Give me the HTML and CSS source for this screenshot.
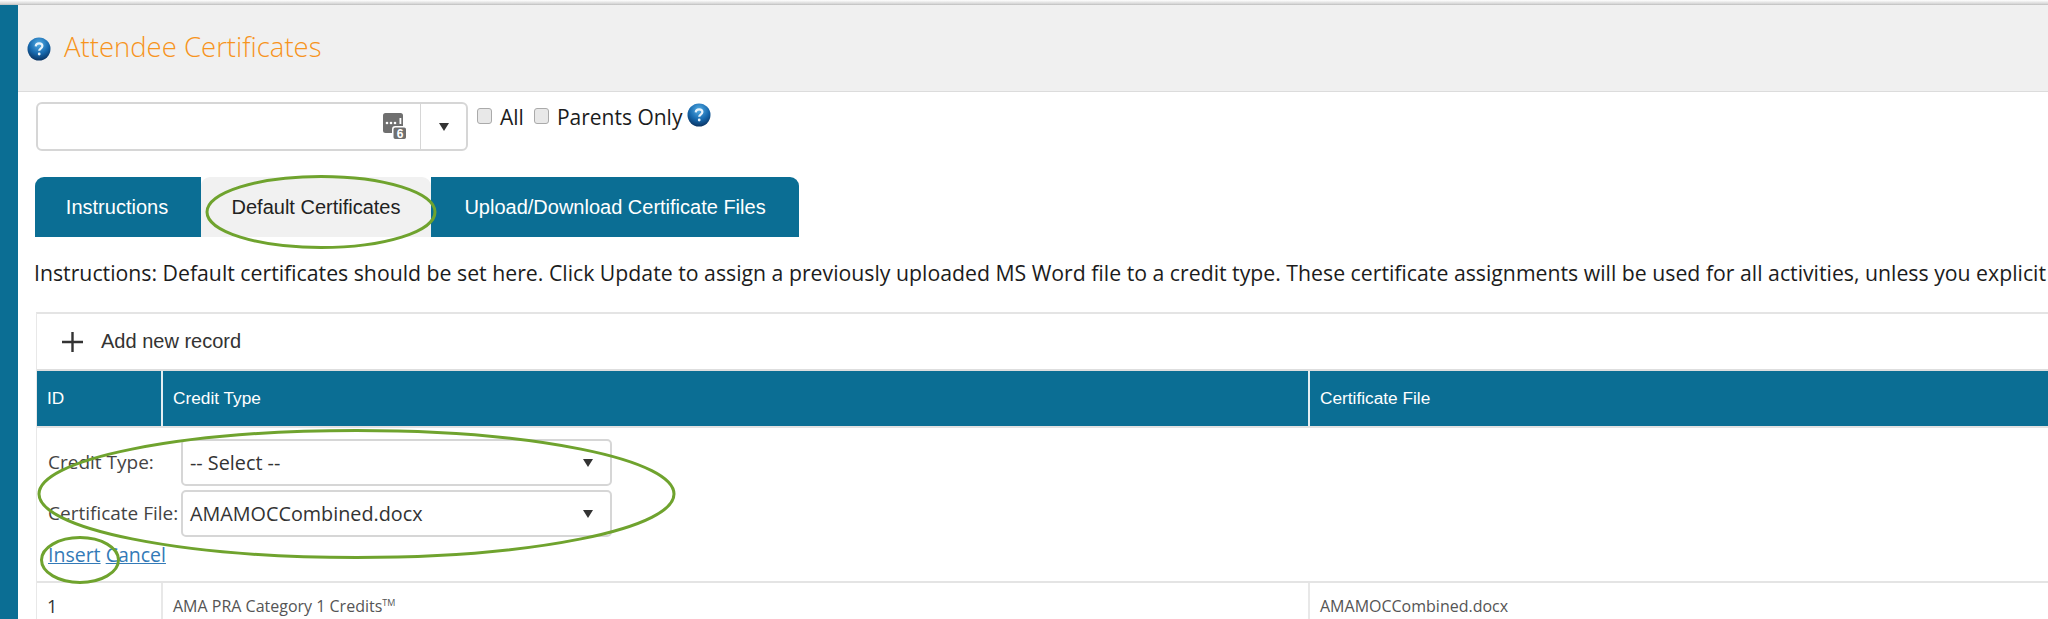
FILE: index.html
```html
<!DOCTYPE html>
<html lang="en">
<head>
<meta charset="utf-8">
<title>Attendee Certificates</title>
<link rel="stylesheet" href="styles.css">
</head>
<body>
<div class="topline"></div>
<div class="shell">
  <aside class="sidebar"></aside>
  <main class="main">
    <header class="pagehead">
      <svg class="help help-lg" viewBox="0 0 24 24"><defs><radialGradient id="hg" cx="50%" cy="28%" r="78%"><stop offset="0" stop-color="#55aee6"/><stop offset=".55" stop-color="#1668ad"/><stop offset="1" stop-color="#082a55"/></radialGradient></defs><circle cx="12" cy="12" r="11.500" fill="url(#hg)"/><path d="M8.700 9.300c.2-2 1.600-3 3.400-3 1.900 0 3.300 1.100 3.300 2.800 0 2.500-3.200 2.500-3.200 4.600" fill="none" stroke="#e8f3fb" stroke-width="2.200"/><circle cx="12.200" cy="17" r="1.400" fill="#e8f3fb"/></svg>
      <h1 class="title">Attendee Certificates</h1>
    </header>
    <div class="filter">
      <div class="combo">
        <div class="combo-input">
          <svg class="combo-icon" viewBox="0 0 24 27"><rect width="20" height="20" rx="2.500" fill="#6f6f6f"/><g fill="#fff"><circle cx="4" cy="10" r="1.300"/><circle cx="8" cy="10" r="1.300"/><circle cx="12" cy="10" r="1.300"/><rect x="16.500" y="5" width="1.800" height="6"/></g><rect x="9.750" y="13.750" width="14" height="13" rx="2.500" fill="#6f6f6f" stroke="#fff" stroke-width="1.500"/><text x="17" y="25" class="combo-num">6</text></svg>
        </div>
        <div class="combo-btn"><span class="tri"></span></div>
      </div>
      <label class="check check-all"><span class="box"></span>All</label>
      <label class="check"><span class="box"></span>Parents Only</label>
      <svg class="help help-sm" viewBox="0 0 24 24"><circle cx="12" cy="12" r="11.500" fill="url(#hg)"/><path d="M8.700 9.300c.2-2 1.600-3 3.400-3 1.900 0 3.300 1.100 3.300 2.800 0 2.500-3.200 2.500-3.200 4.600" fill="none" stroke="#e8f3fb" stroke-width="2.200"/><circle cx="12.200" cy="17" r="1.400" fill="#e8f3fb"/></svg>
    </div>
    <nav class="tabs">
      <a class="tab tab-first">Instructions</a>
      <a class="tab tab-active">Default Certificates</a>
      <a class="tab tab-last">Upload/Download Certificate Files</a>
    </nav>
    <p class="instructions">Instructions: Default certificates should be set here. Click Update to assign a previously uploaded MS Word file to a credit type. These certificate assignments will be used for all activities, unless you explicit</p>
    <section class="grid">
      <div class="toolbar">
        <svg class="plus" viewBox="0 0 21 20"><path d="M10.500 0v20M0 10h21" stroke="#333" stroke-width="2.400" fill="none"/></svg>
        <span>Add new record</span>
      </div>
      <div class="row row-head">
        <div class="cell">ID</div>
        <div class="cell">Credit Type</div>
        <div class="cell">Certificate File</div>
      </div>
      <form class="editor">
        <div class="field">
          <span class="field-label">Credit Type:</span>
          <div class="select"><span>-- Select --</span><span class="tri"></span></div>
        </div>
        <div class="field">
          <span class="field-label">Certificate File:</span>
          <div class="select"><span>AMAMOCCombined.docx</span><span class="tri"></span></div>
        </div>
        <div class="actions"><a class="link">Insert</a> <a class="link">Cancel</a></div>
      </form>
      <div class="row row-data">
        <div class="cell cell-id">1</div>
        <div class="cell">AMA PRA Category 1 Credits<sup class="tm">TM</sup></div>
        <div class="cell">AMAMOCCombined.docx</div>
      </div>
    </section>
  </main>
</div>
<svg class="marks" viewBox="0 0 2048 619" width="2048" height="619">
  <ellipse cx="321" cy="212" rx="114" ry="35.500"/>
  <ellipse cx="356.500" cy="494" rx="317.500" ry="63.500"/>
  <ellipse cx="80" cy="560" rx="38.500" ry="22.500"/>
</svg>
</body>
</html>
```
FILE: styles.css
```css
* { box-sizing: border-box; }
html, body { margin: 0; height: 619px; overflow: hidden; background: #fff; }
body { font-family: "Open Sans", sans-serif; color: #1c1c1c; position: relative; }
.topline { height: 5px; background: linear-gradient(#fff, #d9d9d9 70%, #bdbdbd); }
.shell { display: flex; height: 614px; }
.sidebar { width: 18px; flex: none; background: #0b6e94; }
.main { flex: 1; min-width: 0; overflow: hidden; }
.pagehead { height: 87px; display: flex; align-items: center; padding-left: 9px; gap: 13px; background: #f0f0f0; border-bottom: 1px solid #dcdcdc; }
.help { display: block; flex: none; }
.help-lg { width: 24px; height: 24px; margin-top: 2px; }
.help-sm { width: 24px; height: 24px; margin: 1px 0 0 5px; }
.title { margin: 0 0 2px; font-size: 27.500px; font-weight: 300; color: #f7941d; line-height: 32px; }
.filter { display: flex; align-items: flex-start; padding: 10px 0 0 18px; height: 85px; }
.combo { width: 432px; height: 49px; display: flex; border: 2px solid #d6d6d6; border-radius: 6px; background: #fff; }
.combo-input { flex: 1; display: flex; align-items: center; justify-content: flex-end; padding-right: 13px; border-right: 1px solid #d6d6d6; }
.combo-icon { width: 24px; height: 27px; }
.combo-num { font: bold 12px "Liberation Sans", sans-serif; fill: #fff; text-anchor: middle; }
.combo-btn { width: 45px; display: flex; align-items: center; justify-content: center; }
.tri { display: block; width: 0; height: 0; border-left: 5px solid transparent; border-right: 5px solid transparent; border-top: 8px solid #333; }
.check { display: flex; align-items: flex-start; font-size: 21px; line-height: 28px; margin-top: 1px; }
.check-all { margin-left: 9px; margin-right: 10px; }
.box { width: 15px; height: 16px; margin: 5px 8px 0 0; background: #e8e8e8; border: 1px solid #aaa; border-radius: 3px; }
.tabs { display: flex; height: 60px; margin-left: 17px; font: 20px/60px "Liberation Sans", sans-serif; }
.tab { display: block; color: #fff; background: #0b6e94; text-align: center; }
.tab-first { width: 166px; padding-right: 2px; border-radius: 9px 0 0 0; }
.tab-active { width: 230px; background: #f1f1f1; color: #222; border-radius: 9px 9px 0 0; }
.tab-last { width: 368px; border-radius: 0 9px 0 0; }
.instructions { margin: 0 0 0 16px; height: 75px; padding-top: 22px; font-size: 21.250px; line-height: 28px; white-space: nowrap; }
.grid { margin-left: 18px; border-top: 2px solid #e4e4e4; border-left: 1px solid #e8e8e8; }
.toolbar { height: 55px; display: flex; align-items: center; gap: 18px; padding-left: 25px; font: 20px "Liberation Sans", sans-serif; color: #333; }
.plus { width: 21px; height: 20px; }
.row { display: grid; grid-template-columns: 124px 1147px 1fr; }
.row-head { height: 59px; background: #0b6e94; border-top: 2px solid #dedede; border-bottom: 2px solid #e2e2e2; color: #fff; font: 17.250px/55px "Liberation Sans", sans-serif; }
.row-head .cell { padding-left: 10px; }
.row-head .cell + .cell { border-left: 2px solid #e4eef2; }
.editor { height: 153px; padding: 11px 0 0 11px; font-size: 19px; color: #444; }
.field { display: flex; align-items: center; height: 47px; margin-bottom: 4px; }
.field-label { width: 133px; flex: none; padding-bottom: 2px; }
.select { width: 431px; height: 47px; display: flex; align-items: center; justify-content: space-between; padding: 0 17px 0 7px; border: 2px solid #d6d6d6; border-radius: 5px; font-size: 19.800px; color: #333; background: #fff; }
.actions { margin-top: 2px; font-size: 19.500px; line-height: 28px; }
.link { color: #337ab7; text-decoration: underline; }
.row-data { height: 40px; border-top: 2px solid #e4e4e4; font-size: 16px; line-height: 46px; color: #555; }
.row-data .cell { padding-left: 10px; }
.row-data .cell + .cell { border-left: 2px solid #e8e8e8; }
.cell-id { font-size: 18px; color: #333; }
.tm { font-size: 9px; line-height: 0; }
.marks { position: absolute; left: 0; top: 0; pointer-events: none; }
.marks ellipse { fill: none; stroke: #6fa32e; stroke-width: 3; }
```
